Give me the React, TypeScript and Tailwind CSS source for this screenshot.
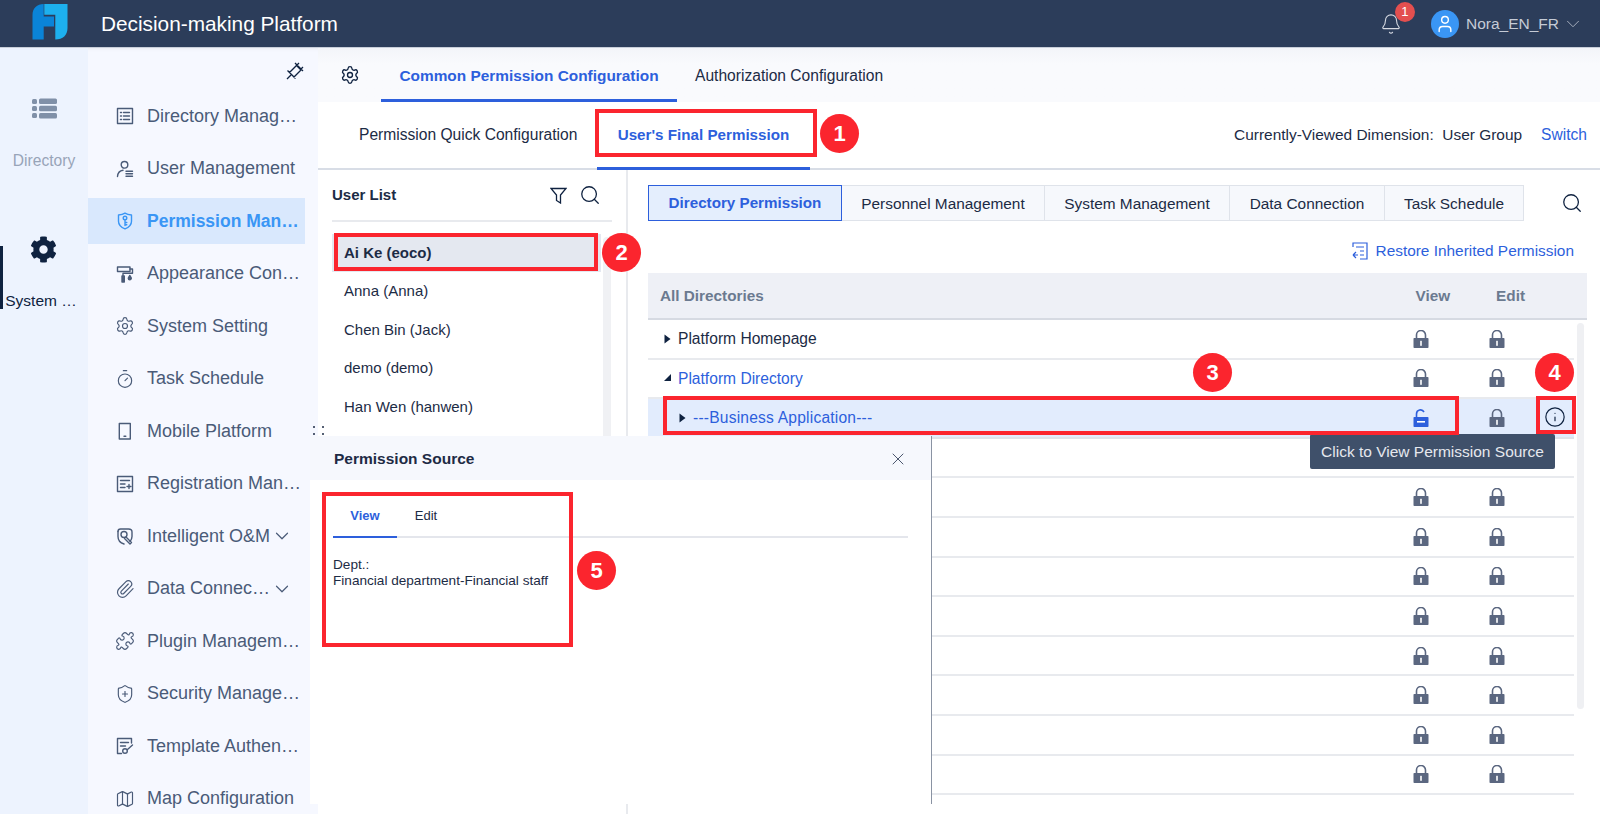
import React from "react";
import { Settings, Search, ChevronDown, Bell, X, Timer, Paperclip, Puzzle, ShieldPlus, Map as MapIcon, Info, User } from "lucide-react";
import { FaCog } from "react-icons/fa";

const S = ({ children, size = 18 }: { children: React.ReactNode; size?: number }) => (
  <svg width={size} height={size} viewBox="0 0 18 18" fill="none" stroke="currentColor" strokeWidth="1.4" strokeLinecap="round" strokeLinejoin="round">
    {children}
  </svg>
);

const DirIcon = () => (
  <S><rect x="1.5" y="1.5" width="15" height="15" /><path d="M4.5 5.5h1M4.5 9h1M4.5 12.5h1M7.5 5.5h6M7.5 9h6M7.5 12.5h6" /></S>
);
const UserIcon = () => (
  <S><circle cx="8.5" cy="4.8" r="3.3" /><path d="M1.5 16.5c.3-3.6 2.4-6 5.5-6.3M10 11.2h6.5M10 13.8h6.5M10 16.3h6.5" /></S>
);
const PermIcon = () => (
  <S><path d="M9 1.2c1.8 1.2 4 1.7 6.5 1.8v6.2c0 3.6-2.8 6.2-6.5 7.6-3.7-1.4-6.5-4-6.5-7.6V3C5 2.900 7.200 2.400 9 1.200z" /><circle cx="9" cy="6" r="1.800" /><path d="M9 7.800v5.700M9 10.500h1.800M9 12.800h1.800" /></S>
);
const RollerIcon = () => (
  <S><path d="M1.500 2h12.500v4.500H1.500z" /><path d="M14 4h2.500v4.200H7v2.800" /><path d="M6 11h2.300v6H6z" fill="currentColor" /><path d="M13.800 10.500c.9 1.300 1.500 2 1.500 2.800a1.500 1.500 0 0 1-3 0c0-.8.600-1.500 1.500-2.800z" fill="currentColor" /></S>
);
const MobileIcon = () => (
  <S><rect x="3.300" y="1.500" width="11" height="15.500" /><path d="M8 14.200h1.800" /></S>
);
const RegIcon = () => (
  <S><rect x="1.500" y="1.500" width="15" height="15" /><path d="M4.500 5.500h9M4.500 9h4.500M4.500 12.500h4.500M13 9.500v4M11 11.500h4" /></S>
);
const OmIcon = () => (
  <S><path d="M2 4.500C2 2.800 3 2 4.500 2h8C14.500 2 16 3.200 16 5v4.500c0 2-.8 3.600-2 5" /><path d="M2 4.500v5c0 3.800 2.500 6.500 6 7.500" /><circle cx="8" cy="7.500" r="3" /><path d="M10 10l5.500 5.500-1.500 1.500L8.500 11.500" /></S>
);
const TplIcon = () => (
  <S><path d="M15.500 6V1.500h-14v15h4" /><path d="M4.500 5.500h8M4.500 9h5" /><circle cx="9" cy="14" r="2.300" /><path d="M11.500 12.500L16.500 8" /></S>
);

const big = "-m-[1px] shrink-0";
const rows: [string, React.ReactNode, boolean?][] = [
  ["Directory Manag…", <DirIcon />],
  ["User Management", <UserIcon />],
  ["Permission Man…", <PermIcon />],
  ["Appearance Con…", <RollerIcon />],
  ["System Setting", <Settings size={20} strokeWidth={1.4} className={big} />],
  ["Task Schedule", <Timer size={20} strokeWidth={1.4} className={big} />],
  ["Mobile Platform", <MobileIcon />],
  ["Registration Man…", <RegIcon />],
  ["Intelligent O&M", <OmIcon />, true],
  ["Data Connec…", <Paperclip size={20} strokeWidth={1.4} className={big} />, true],
  ["Plugin Managem…", <Puzzle size={20} strokeWidth={1.4} className={big} />],
  ["Security Manage…", <ShieldPlus size={20} strokeWidth={1.4} className={big} />],
  ["Template Authen…", <TplIcon />],
  ["Map Configuration", <MapIcon size={20} strokeWidth={1.4} className={big} />],
];

const Lock = ({ open = false }: { open?: boolean }) => (
  <svg width="16" height="18" viewBox="0 0 16 18" className={open ? "text-[#2d5fdc]" : "text-[#5b6780]"}>
    <path d={open ? "M3.500 9V5a4 4 0 0 1 7.500-2" : "M3.500 9V5a4.500 4.500 0 0 1 9 0v4"} fill="none" stroke="currentColor" strokeWidth="1.600" />
    <rect x="0.500" y="8" width="15" height="10" rx="0.800" fill="currentColor" />
    {open ? <rect x="4" y="12" width="8" height="1.600" fill="#fff" /> : <rect x="7.200" y="10.800" width="1.600" height="5" fill="#fff" />}
  </svg>
);

const Tri = ({ down = false }: { down?: boolean }) => (
  <svg width="7" height="10" viewBox="0 0 7 10" className="text-[#0f2240] shrink-0">
    {down ? <path d="M0 8h7V1z" fill="currentColor" /> : <path d="M0.500 0.500L6.500 5L0.500 9.500z" fill="currentColor" />}
  </svg>
);

const Badge = ({ n, cls }: { n: string; cls: string }) => (
  <div className={`absolute w-[39px] h-[39px] rounded-full bg-[#fb252e] text-white font-bold text-[22px] flex items-center justify-center ${cls}`}>{n}</div>
);

const LockRow = ({ open = false, highlight = false, children }: { open?: boolean; highlight?: boolean; children?: React.ReactNode }) => (
  <div className={`h-[39.600px] flex items-center border-b-2 ${highlight ? "bg-[#e2ecfd] border-[#dfe3ea]" : "border-[#e8eaee]"}`}>
    <div className="flex-1 min-w-0 flex items-center text-[15.600px]">{children}</div>
    <div className="w-[76px] flex"><Lock open={open} /></div>
    <div className="w-[85px] flex"><Lock /></div>
  </div>
);

export default function App() {
  return (
    <div className="relative w-[1600px] h-[814px] overflow-hidden bg-white flex flex-col text-[#1c2b45]" style={{ fontFamily: '"Liberation Sans", Arial, sans-serif' }}>
      {/* Header */}
      <header className="h-[48px] shrink-0 bg-[#2c3d5a] border-b border-[#c8ced9] flex items-center text-white">
        <svg width="36" height="36" viewBox="0 0 36 36" className="ml-[32px] mb-[3px]">
          <path d="M11.700 0C5 0 0.500 4 0.500 11V35.500H11.700V22.500H22V12.500H11.700z" fill="#0a84d8" />
          <path d="M12.300 0H35.500V24C35.500 31 31 35.500 23.300 35.500V10.700H12.300z" fill="#1db0ee" />
        </svg>
        <div className="ml-[33px] text-[20.800px]">Decision-making Platform</div>
        <div className="ml-auto relative flex items-center">
          <div className="relative mr-[29px]">
            <Bell size={22} strokeWidth={1.2} className="text-[#d6dae2]" />
            <div className="absolute -top-[11px] left-[15px] w-[20px] h-[20px] rounded-full bg-[#e34f4f] text-white text-[13px] flex items-center justify-center">1</div>
          </div>
          <div className="w-[28px] h-[28px] rounded-full bg-[#3a96f5] flex items-center justify-center">
            <User size={20} strokeWidth={1.7} className="text-white" />
          </div>
          <div className="ml-[7px] text-[15.500px] text-[#c5cbd6]">Nora_EN_FR</div>
          <ChevronDown size={22} strokeWidth={1} className="ml-[3px] mr-[16px] text-[#aeb6c4]" />
        </div>
      </header>

      <div className="flex-1 min-h-0 flex">
        {/* Rail */}
        <aside className="w-[88px] shrink-0 bg-[#edf3fe] flex flex-col items-center relative">
          <svg width="25" height="21" viewBox="0 0 25 21" className="mt-[50px] text-[#8090a8]" fill="currentColor">
            <rect x="0" y="1" width="5" height="5" rx="1.500" /><rect x="7" y="0.500" width="18" height="5.500" rx="1.500" />
            <rect x="0" y="8" width="5" height="5" rx="1.500" /><rect x="7" y="7.700" width="18" height="5.500" rx="1.500" />
            <rect x="0" y="15" width="5" height="5" rx="1.500" /><rect x="7" y="15" width="18" height="5.500" rx="1.500" />
          </svg>
          <div className="mt-[30px] text-[15.600px] text-[#98a4b8]">Directory</div>
          <FaCog size={27} className="mt-[64px] -translate-x-[1px] text-[#0f2240]" />
          <div className="mt-[26px] -translate-x-[3px] text-[15.500px] text-[#0f2240]">System …</div>
          <div className="absolute left-0 top-[198px] w-[3px] h-[63px] bg-[#0f2240]" />
        </aside>

        {/* Sidebar */}
        <nav className="w-[230px] shrink-0 bg-[#f6f8ff] pr-[13px] overflow-hidden shadow-[inset_0_4px_4px_-4px_rgba(0,0,0,0.08)]">
          <div className="h-[45px] flex justify-end items-center pr-[1px] pt-[1px]">
            <svg width="18" height="18" viewBox="0 0 18 18" fill="none" stroke="#0f2240" strokeWidth="1.300">
              <path d="M3.500 10.500L10.500 3.500L15 8L8 15zM1 17l4-4M9 1l8 8M1.500 8.500l8 8M13 1l-2 2M17 5l-2 2" />
            </svg>
          </div>
          {rows.map(([t, icon, chev], i) => {
            const active = i === 2;
            return (
              <div key={t} className={`h-[46px] mb-[6.500px] flex items-center pl-[28px] ${active ? "bg-[#d9e8fd] text-[#3a96f5]" : "text-[#4a5b78]"}`}>
                <span className={`w-[18px] h-[18px] shrink-0 flex ${active ? "text-[#3a96f5]" : "text-[#4a5b78]"}`}>{icon}</span>
                <span className={`ml-[13px] whitespace-nowrap ${active ? "font-bold text-[17.500px]" : "text-[18px]"}`}>{t}</span>
                {chev && <ChevronDown size={22} strokeWidth={1.3} className="ml-[1px] shrink-0" />}
              </div>
            );
          })}
        </nav>

        {/* Main */}
        <main className="flex-1 min-w-0 flex flex-col">
          <div className="h-[54px] shrink-0 bg-gradient-to-b from-[#f3f5f9] to-[#f9fafd] to-[30%] flex items-stretch">
            <div className="w-[63px] flex items-center pl-[22px]"><Settings size={20} strokeWidth={1.6} className="text-[#0f2240]" /></div>
            <div className="w-[296px] border-b-[3px] border-[#2d5fdc] flex items-center justify-center pt-[4px] font-bold text-[15.400px] text-[#2d5fdc]">Common Permission Configuration</div>
            <div className="ml-[18px] flex items-center pt-[2px] text-[15.600px]">Authorization Configuration</div>
          </div>
          <div className="h-[68px] shrink-0 border-b-2 border-[#d8dde6] flex items-stretch text-[15.600px]">
            <div className="ml-[41px] w-[218px] flex items-center whitespace-nowrap">Permission Quick Configuration</div>
            <div className="ml-[20px] w-[213px] border-b-[3px] -mb-[2px] pt-[2px] border-[#2d5fdc] flex items-center justify-center font-bold text-[15.200px] text-[#2d5fdc]">User's Final Permission</div>
            <div className="ml-auto flex items-center whitespace-pre pr-[13px]">
              <span className="text-[15.450px]">Currently-Viewed Dimension:  User Group</span>
              <span className="ml-[19px] text-[#2d5fdc]">Switch</span>
            </div>
          </div>
          <div className="flex-1 min-h-0 flex">
            {/* User list */}
            <section className="w-[310px] shrink-0 border-r-2 border-[#e8eaee] pl-[14px] pr-[14px] overflow-hidden">
              <div className="h-[52px] border-b-2 border-[#e8eaee] flex items-center -mb-[1px]">
                <span className="font-bold text-[15px]">User List</span>
                <svg width="17" height="17" viewBox="0 0 17 17" fill="none" stroke="#0f2240" strokeWidth="1.300" className="ml-auto mr-[12px]">
                  <path d="M1 1.500h15l-5.500 6.500v8l-4-2.500V8z" />
                </svg>
                <Search size={22} strokeWidth={1.4} className="text-[#0f2240] mr-[11px]" />
              </div>
              <div className="flex mt-[13px]">
                <div className="w-[269px] text-[15px]">
                  <div className="h-[38px] bg-[#e4e8f0] flex items-center pl-[12px] font-bold">Ai Ke (eoco)</div>
                  {["Anna (Anna)", "Chen Bin (Jack)", "demo (demo)", "Han Wen (hanwen)"].map((t) => (
                    <div key={t} className="h-[38.500px] flex items-center pl-[12px]">{t}</div>
                  ))}
                </div>
                <div className="ml-[2px] w-[8px] h-[560px] bg-[#f0f1f4] rounded-[4px] mt-[3px]" />
              </div>
            </section>

            {/* Directory permission */}
            <section className="flex-1 min-w-0 pl-[20px] pr-[13px] pt-[15px] overflow-hidden">
              <div className="flex items-center">
                <div className="flex h-[36px] text-[15.400px]">
                  <div className="w-[194px] pt-[1px] bg-[#e4eefd] border border-[#2d5fdc] text-[#2d5fdc] font-bold text-[15.200px] flex items-center justify-center">Directory Permission</div>
                  {[["Personnel Management", "w-[203px]"], ["System Management", "w-[185px]"], ["Data Connection", "w-[155px]"], ["Task Schedule", "w-[139px]"]].map(([t, w]) => (
                    <div key={t} className={`${w} pt-[1px] bg-[#f6f8fc] border border-l-0 border-[#dfe3ea] flex items-center justify-center`}>{t}</div>
                  ))}
                </div>
                <Search size={22} strokeWidth={1.4} className="ml-auto -translate-x-[4px] text-[#0f2240]" />
              </div>
              <div className="mt-[19px] h-[22px] flex items-center justify-end pr-[13px] text-[15.400px] text-[#2d5fdc]">
                <svg width="16" height="18" viewBox="0 0 16 18" fill="none" stroke="currentColor" strokeWidth="1.200" className="mr-[8px]">
                  <path d="M1 5V1h14v16H8M4 5h8M8 9h4M8 13h4M1 13l3-3M1 13l3 3M1 13h5" />
                </svg>
                Restore Inherited Permission
              </div>
              <div className="mt-[11px] h-[47px] pt-[1px] bg-[#eef0f6] border-b-2 border-[#d6dae2] flex items-center text-[15.300px] font-bold text-[#6b7a90]">
                <span className="ml-[12px]">All Directories</span>
                <span className="ml-auto mr-[46px]">View</span>
                <span className="mr-[62px]">Edit</span>
              </div>
              <div className="flex">
                <div className="w-[926px]">
                  <LockRow><span className="ml-[16px]"><Tri /></span><span className="ml-[7px]">Platform Homepage</span></LockRow>
                  <LockRow><span className="ml-[16px]"><Tri down /></span><span className="ml-[7px] text-[#2d5fdc]">Platform Directory</span></LockRow>
                  <LockRow open highlight><span className="ml-[31px]"><Tri /></span><span className="ml-[7px] text-[#2d5fdc] tracking-[0.2px]">---Business Application---</span></LockRow>
                  {Array.from({ length: 9 }).map((_, i) => <LockRow key={i} />)}
                </div>
                <div className="ml-[3px] mt-[3px] w-[7px] h-[386px] bg-[#eff0f3] rounded-[4px]" />
              </div>
            </section>
          </div>
        </main>
      </div>

      {/* Info icon and tooltip */}
      <Info size={22} strokeWidth={1.3} className="absolute left-[1544px] top-[406px] text-[#0f2240]" />
      <div className="absolute left-[1310px] top-[434px] w-[245px] h-[35px] rounded-[2px] bg-[#3f506a] text-[#e6e8ee] text-[15.500px] flex items-center justify-center">Click to View Permission Source</div>

      {/* Drag handle */}
      <div className="absolute left-[313px] top-[426px] grid grid-cols-2 gap-x-[7px] gap-y-[5px]">
        {[0, 1, 2, 3].map((i) => <span key={i} className="w-[2px] h-[2px] rounded-full bg-[#1c2b45]" />)}
      </div>

      {/* Permission source popup */}
      <div className="absolute left-[310px] top-[436px] w-[622px] h-[368px] bg-white border-r border-[#8a93a3] flex flex-col">
        <div className="h-[44px] shrink-0 bg-[#f6f8fd] flex items-center pl-[24px] pr-[23px] pt-[1px]">
          <span className="font-bold text-[15.500px] text-[#1e2b45]">Permission Source</span>
          <X size={20} strokeWidth={1.1} className="ml-auto text-[#3b4760]" />
        </div>
        <div className="mx-[23px] mt-[15px] h-[43px] flex items-stretch border-b-2 border-[#e4e6ec] text-[13px]">
          <div className="w-[64px] -mb-[2px] border-b-2 border-[#2d5fdc] font-bold text-[#2d5fdc] flex items-center justify-center">View</div>
          <div className="ml-[13px] w-[32px] flex items-center justify-center">Edit</div>
        </div>
        <div className="ml-[23px] mt-[19px] text-[13.600px] leading-[15.500px]">
          <div>Dept.:</div>
          <div>Financial department-Financial staff</div>
        </div>
      </div>

      {/* Annotations */}
      <div className="absolute left-[595px] top-[109px] w-[222px] h-[48px] border-[4px] border-[#fb252e]" />
      <div className="absolute left-[334px] top-[233px] w-[264px] h-[38px] border-[4px] border-[#fb252e]" />
      <div className="absolute left-[663px] top-[396px] w-[796px] h-[39px] border-[4px] border-[#fb252e]" />
      <div className="absolute left-[1536px] top-[396px] w-[40px] h-[38px] border-[4px] border-[#fb252e]" />
      <div className="absolute left-[322px] top-[492px] w-[251px] h-[155px] border-[4px] border-[#fb252e]" />
      <Badge n="1" cls="left-[820px] top-[114px]" />
      <Badge n="2" cls="left-[602px] top-[233px]" />
      <Badge n="3" cls="left-[1193px] top-[353px]" />
      <Badge n="4" cls="left-[1535px] top-[353px]" />
      <Badge n="5" cls="left-[577px] top-[551px]" />
    </div>
  );
}
